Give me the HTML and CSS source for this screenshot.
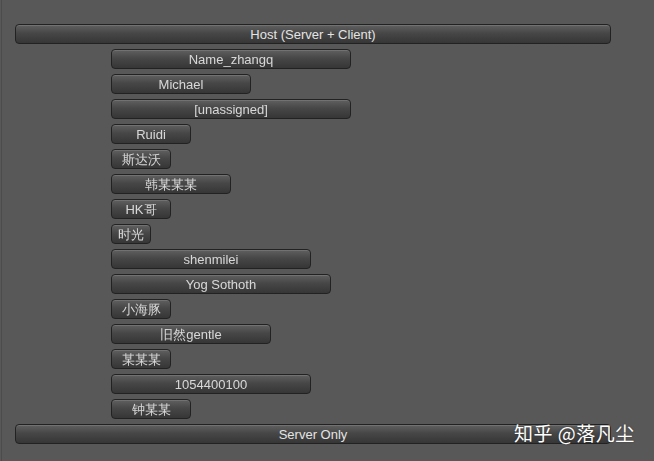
FILE: index.html
```html
<!DOCTYPE html>
<html lang="zh">
<head>
<meta charset="utf-8">
<title>Lobby</title>
<link rel="stylesheet" href="styles.css">
</head>
<body>
<div class="screen">
  <div class="list">
    <div class="btn wide">Host (Server + Client)</div>
    <div class="btn row w240"><span class="smudge">Name_zhangq</span></div>
    <div class="btn row w140"><span class="smudge">Michael</span></div>
    <div class="btn row w240"><span class="smudge">[unassigned]</span></div>
    <div class="btn row w80"><span class="smudge">Ruidi</span></div>
    <div class="btn row w60"><span class="smudge">斯达沃</span></div>
    <div class="btn row w120"><span class="smudge">韩某某某</span></div>
    <div class="btn row w60"><span class="smudge">HK哥</span></div>
    <div class="btn row w40"><span class="smudge">时光</span></div>
    <div class="btn row w200"><span class="smudge">shenmilei</span></div>
    <div class="btn row w220"><span class="smudge">Yog Sothoth</span></div>
    <div class="btn row w60"><span class="smudge">小海豚</span></div>
    <div class="btn row w160"><span class="smudge">旧然gentle</span></div>
    <div class="btn row w60"><span class="smudge">某某某</span></div>
    <div class="btn row w200"><span class="smudge">1054400100</span></div>
    <div class="btn row w80"><span class="smudge">钟某某</span></div>
    <div class="btn wide">Server Only</div>
  </div>
  <div class="watermark">知乎 @落凡尘</div>
</div>
</body>
</html>
```

FILE: styles.css
```css
html, body {
  margin: 0;
  padding: 0;
  background: #585858;
}

.screen {
  position: relative;
  width: 654px;
  height: 461px;
  box-sizing: border-box;
  border-left: 1px solid #4c4c4c;
  margin-left: 1px;
  overflow: hidden;
  font-family: "Liberation Sans", Arial, sans-serif;
}

.list {
  display: flex;
  flex-direction: column;
  align-items: flex-start;
  gap: 5px;
  padding: 24px 0 0 13px;
}

.btn {
  box-sizing: border-box;
  height: 20px;
  padding-top: 1px;
  display: flex;
  align-items: center;
  justify-content: center;
  border: 1px solid #222222;
  border-radius: 4px;
  background: linear-gradient(#606060 0%, #474747 45%, #363636 100%);
  box-shadow: inset 0 1px 0 rgba(255, 255, 255, 0.12);
  color: #e4e4e4;
  font-size: 13px;
  line-height: 1;
  white-space: nowrap;
  overflow: hidden;
}

.wide {
  width: 596px;
}

.row {
  margin-left: 96px;
}

.w40 { width: 40px; }
.w60 { width: 60px; }
.w80 { width: 80px; }
.w120 { width: 120px; }
.w140 { width: 140px; }
.w160 { width: 160px; }
.w200 { width: 200px; }
.w220 { width: 220px; }
.w240 { width: 240px; }

.smudge {
  filter: blur(0.6px);
  opacity: 0.92;
}

.watermark {
  position: absolute;
  left: 512px;
  top: 420px;
  color: #ffffff;
  font-family: "Noto Sans CJK SC", "Noto Sans", sans-serif;
  font-size: 19px;
  letter-spacing: 0.5px;
  line-height: 26px;
  text-shadow: 0 0 2px rgba(0, 0, 0, 0.35);
}
```
